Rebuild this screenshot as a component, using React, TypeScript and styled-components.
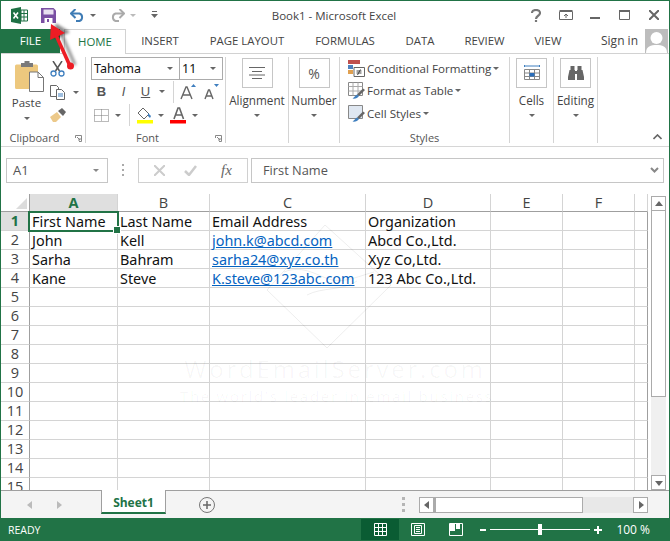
import styled, { createGlobalStyle } from "styled-components";

const Global = createGlobalStyle`
    html, body { margin: 0; padding: 0; background: #fff; }
    * { box-sizing: border-box; }
    body { font-family: "Open Sans", "Noto Sans", sans-serif; color: #444; overflow: hidden; }
`;

const GREEN = "#217346";
const CELL_FONT = `"Noto Sans", "Open Sans", sans-serif`;

const Win = styled.div`
    width: 670px;
    height: 541px;
    position: relative;
    overflow: hidden;
    display: flex;
    flex-direction: column;
    border-top: 1px solid ${GREEN};
    border-left: 1px solid ${GREEN};
    border-right: 1px solid ${GREEN};
`;

/* title bar */
const TitleBar = styled.div`
    height: 28px;
    display: flex;
    align-items: center;
    padding-left: 10px;
`;
const Qat = styled.div`
    display: flex;
    align-items: center;
    width: 230px;
`;
const QatSlot = styled.span<{ $w: number }>`
    width: ${(p) => p.$w}px;
    display: flex;
    align-items: center;
`;
const Title = styled.div`
    width: 186px;
    text-align: center;
    font-size: 11.5px;
    color: #444;
    white-space: nowrap;
`;
const WinBtns = styled.div`
    margin-left: auto;
    display: flex;
    align-items: center;
    height: 100%;
`;
const WinBtn = styled.span`
    width: 29.5px;
    display: flex;
    justify-content: center;
`;

/* tabs */
const TabBar = styled.div`
    height: 25px;
    display: flex;
    align-items: stretch;
    border-bottom: 1px solid #d2d2d2;
    margin-left: -1px;
`;
const FileTab = styled.div`
    width: 60px;
    background: ${GREEN};
    color: #fff;
    font-size: 11.5px;
    display: flex;
    align-items: center;
    justify-content: center;
    margin-right: 4px;
    padding: 0 0 2px 1px;
`;
const Tab = styled.div<{ $w: number; $active?: boolean }>`
    width: ${(p) => p.$w}px;
    font-size: 11.4px;
    display: flex;
    align-items: center;
    justify-content: center;
    padding-bottom: 2px;
    color: ${(p) => (p.$active ? GREEN : "#444")};
    ${(p) =>
        p.$active &&
        `background:#fff;border:1px solid #d2d2d2;border-bottom:0;height:25px;`}
`;
const SignIn = styled.div`
    margin-left: auto;
    display: flex;
    align-items: center;
    gap: 7px;
    font-size: 12px;
    padding-right: 1px;
`;
const SignText = styled.span`
    padding-bottom: 2px;
`;
const Avatar = styled.div`
    width: 23px;
    height: 24px;
    background: #bdbdbd;
    overflow: hidden;
`;

/* ribbon */
const Ribbon = styled.div`
    height: 93px;
    display: flex;
    border-bottom: 1px solid #d6d6d6;
    position: relative;
    padding-left: 2px;
`;
const Group = styled.div<{ $w: number }>`
    width: ${(p) => p.$w}px;
    margin: 3px 0;
    border-right: 1px solid #d4d4d4;
    display: flex;
    flex-direction: column;
    position: relative;
`;
const GroupBody = styled.div`
    flex: 1;
    display: flex;
    min-height: 0;
`;
const GroupLabel = styled.div<{ $pr?: number }>`
    height: 10px;
    font-size: 11px;
    color: #555;
    text-align: center;
    line-height: 10px;
    padding-right: ${(p) => p.$pr ?? 0}px;
`;
const Launcher = styled.span`
    position: absolute;
    right: 3px;
    bottom: 1px;
    display: flex;
`;
const PasteCol = styled.div`
    width: 47px;
    display: flex;
    flex-direction: column;
    align-items: center;
    padding-top: 4px;
    font-size: 11.5px;
    svg { margin-left: 5px; flex: none; }
`;
const PasteText = styled.div`
    margin: 3px 0 6px;
    color: #444;
    line-height: 16px;
`;
const SmallCol = styled.div`
    display: flex;
    flex-direction: column;
    padding-top: 3px;
    gap: 5px;
`;
const SmallIcon = styled.div`
    height: 18px;
    display: flex;
    align-items: center;
    gap: 7px;
`;
const Caret = styled.span<{ $c?: string; $gap?: number }>`
    display: inline-block;
    flex: none;
    width: 0;
    height: 0;
    border-left: 3px solid transparent;
    border-right: 3px solid transparent;
    border-top: 3px solid ${(p) => p.$c || "#666"};
    margin-left: ${(p) => p.$gap ?? 0}px;
`;

const FontCol = styled.div`
    padding: 0 0 0 5px;
    display: flex;
    flex-direction: column;
`;
const Combos = styled.div`
    display: flex;
    flex: none;
    height: 23px;
`;
const Combo = styled.div<{ $w: number; $pl: number }>`
    width: ${(p) => p.$w}px;
    border: 1px solid #ababab;
    margin-right: -1px;
    font-family: ${CELL_FONT};
    font-size: 12.5px;
    color: #111;
    display: flex;
    align-items: center;
    justify-content: space-between;
    padding: 0 6px 0 ${(p) => p.$pl}px;
    background: #fff;
`;
const FontRow = styled.div`
    display: flex;
    flex: none;
    align-items: center;
    height: 23.5px;
`;
const FontBtn = styled.span<{ $w: number }>`
    width: ${(p) => p.$w}px;
    flex: none;
    display: flex;
    justify-content: center;
    align-items: center;
`;
const Letter = styled.span<{ $b?: boolean; $i?: boolean; $u?: boolean }>`
    font-family: "Liberation Sans", sans-serif;
    font-size: 13px;
    color: #555;
    font-weight: ${(p) => (p.$b ? 700 : 400)};
    font-style: ${(p) => (p.$i ? "italic" : "normal")};
    text-decoration: ${(p) => (p.$u ? "underline" : "none")};
`;
const RowSep = styled.span<{ $ml: number }>`
    width: 1px;
    height: 22px;
    flex: none;
    background: #d4d4d4;
    margin: 0 3px 0 ${(p) => p.$ml}px;
`;
const BigCol = styled.div`
    flex: 1;
    display: flex;
    flex-direction: column;
    align-items: center;
    padding-top: 1px;
    font-size: 11.7px;
    color: #444;
`;
const BigBox = styled.div`
    width: 31px;
    height: 30px;
    border: 1px solid #c6c6c6;
    display: flex;
    align-items: center;
    justify-content: center;
    font-size: 14px;
    color: #555;
    margin-bottom: 4px;
`;
const BigText = styled.div`
    line-height: 17px;
    white-space: nowrap;
    margin-bottom: 5px;
`;
const StyleCol = styled.div`
    padding: 0 0 0 8px;
    display: flex;
    flex-direction: column;
`;
const StyleRow = styled.div`
    height: 22.5px;
    display: flex;
    align-items: center;
    gap: 2px;
    font-size: 11.6px;
    white-space: nowrap;
`;
const Collapse = styled.span`
    position: absolute;
    right: 7px;
    bottom: 6px;
    display: flex;
`;

/* formula bar */
const FormulaBar = styled.div`
    height: 46px;
    display: flex;
    align-items: center;
    padding: 0 5px;
`;
const NameBox = styled.div`
    width: 102px;
    height: 25px;
    border: 1px solid #c6c6c6;
    display: flex;
    align-items: center;
    justify-content: space-between;
    padding: 0 8px 0 6px;
    font-size: 13px;
    color: #555;
`;
const Dots = styled.div`
    width: 30px;
    display: flex;
    flex-direction: column;
    align-items: center;
    gap: 3px;
    span { width: 2px; height: 2px; background: #aaa; }
`;
const FxBox = styled.div`
    width: 110px;
    height: 25px;
    border: 1px solid #d0d0d0;
    display: flex;
    align-items: center;
    justify-content: space-around;
    margin-right: 3px;
    padding: 0 6px;
`;
const FxText = styled.span`
    font-family: "Liberation Serif", serif;
    font-style: italic;
    font-size: 15px;
    color: #666;
    padding-left: 6px;
`;
const FormulaInput = styled.div`
    flex: 1;
    height: 25px;
    border: 1px solid #c6c6c6;
    display: flex;
    align-items: center;
    justify-content: space-between;
    padding: 0 4px 0 11px;
    font-size: 12.8px;
    color: #555;
`;

/* grid */
const SheetArea = styled.div`
    flex: none;
    height: 296px;
    display: flex;
    margin-top: 1px;
`;
const Sheet = styled.div`
    width: 647px;
    height: 296px;
    overflow: hidden;
    position: relative;
`;
const Grid = styled.div`
    display: grid;
    grid-template-columns: 29px 88px 92px 156px 125px 72px 72px 13px;
    grid-auto-rows: 19px;
    grid-template-rows: 18px;
`;
const ColHead = styled.div<{ $sel?: boolean }>`
    border-right: 1px solid #d4d4d4;
    border-bottom: 1px solid #9f9f9f;
    background: ${(p) => (p.$sel ? "#dfdfdf" : "#fff")};
    color: ${(p) => (p.$sel ? GREEN : "#444")};
    font-weight: ${(p) => (p.$sel ? 700 : 400)};
    font-size: 14.5px;
    line-height: 17px;
    text-align: center;
`;
const Corner = styled.div`
    border-right: 1px solid #9f9f9f;
    border-bottom: 1px solid #9f9f9f;
    display: flex;
    align-items: flex-end;
    justify-content: flex-end;
    padding: 0 2px 2px 0;
`;
const RowHead = styled.div<{ $sel?: boolean }>`
    border-right: 1px solid #9f9f9f;
    border-bottom: 1px solid #d4d4d4;
    background: ${(p) => (p.$sel ? "#dfdfdf" : "#fff")};
    color: ${(p) => (p.$sel ? GREEN : "#444")};
    font-weight: ${(p) => (p.$sel ? 700 : 400)};
    font-size: 14.5px;
    line-height: 18px;
    text-align: center;
`;
const Cell = styled.div<{ $link?: boolean; $end?: boolean }>`
    border-right: 1px solid ${(p) => (p.$end ? "#9f9f9f" : "#d4d4d4")};
    border-bottom: 1px solid #d4d4d4;
    font-family: ${CELL_FONT};
    font-size: 14.4px;
    line-height: 19px;
    padding-left: 2px;
    white-space: nowrap;
    color: ${(p) => (p.$link ? "#0563c1" : "#111")};
    text-decoration: ${(p) => (p.$link ? "underline" : "none")};
`;
const Selection = styled.div`
    position: absolute;
    left: 27px;
    top: 17px;
    width: 91px;
    height: 21px;
    border: 2px solid ${GREEN};
    pointer-events: none;
    &::after {
        content: "";
        position: absolute;
        right: -4px;
        bottom: -4px;
        width: 6px;
        height: 6px;
        background: ${GREEN};
        border: 1px solid #fff;
    }
`;
const Watermark = styled.div`
    position: absolute;
    left: 179px;
    top: 31px;
    width: 310px;
    text-align: center;
    pointer-events: none;
    color: rgba(0, 0, 0, 0.035);
`;
const MarkGem = styled.svg`
    display: block;
    margin-left: 82px;
`;
const MarkName = styled.div`
    margin-top: 4px;
    font-size: 24px;
    line-height: 32px;
    letter-spacing: 2.8px;
    white-space: nowrap;
`;
const MarkLine = styled.div`
    margin-top: 1px;
    font-size: 15px;
    line-height: 20px;
    letter-spacing: 1.7px;
    white-space: nowrap;
`;

const VScroll = styled.div`
    width: 17px;
    height: 296px;
    margin-left: 3px;
    padding-top: 2px;
    display: flex;
    flex-direction: column;
`;
const ScrollBtn = styled.div`
    width: 15px;
    height: 15px;
    border: 1px solid #ababab;
    display: flex;
    align-items: center;
    justify-content: center;
    flex: none;
    background: #fff;
`;
const VThumb = styled.div`
    width: 15px;
    height: 186px;
    border: 1px solid #ababab;
    border-top: 0;
    background: #fff;
    flex: none;
`;
const VTrack = styled.div`
    width: 15px;
    flex: 1;
    background: #f0f0f0;
`;

/* sheet tabs */
const SheetBar = styled.div`
    height: 28px;
    flex: none;
    background: #f4f4f4;
    border-top: 1px solid #9f9f9f;
    display: flex;
    align-items: center;
`;
const NavArrows = styled.div`
    width: 100px;
    display: flex;
    gap: 21px;
    padding-left: 25px;
`;
const SheetTab = styled.div`
    width: 65px;
    height: 24px;
    align-self: flex-start;
    margin-top: -1px;
    background: #fff;
    border: 1px solid #9f9f9f;
    border-top: 0;
    border-bottom: 2px solid ${GREEN};
    color: ${GREEN};
    font-weight: 700;
    font-size: 12px;
    text-align: center;
    line-height: 25px;
`;
const AddSheet = styled.div`
    width: 16px;
    height: 16px;
    border: 1.5px solid #777;
    border-radius: 50%;
    margin-left: 33px;
    color: #666;
    display: flex;
    align-items: center;
    justify-content: center;
`;
const BarDots = styled.div`
    margin-left: 187px;
    display: flex;
    flex-direction: column;
    gap: 3px;
    span { width: 3px; height: 3px; background: #b5b5b5; }
`;
const HScroll = styled.div`
    margin-left: 14px;
    width: 229px;
    height: 16px;
    display: flex;
    background: #e8e8e8;
`;
const HThumb = styled.div`
    width: 149px;
    height: 16px;
    background: #fff;
    border: 1px solid #ababab;
    border-left: 2px solid #ababab;
    flex: none;
`;
const HGap = styled.div`
    flex: 1;
`;
const HBtn = styled(ScrollBtn)`
    height: 16px;
`;

/* status */
const StatusBar = styled.div`
    height: 23px;
    flex: none;
    background: ${GREEN};
    color: #fff;
    display: flex;
    align-items: center;
    font-size: 10.5px;
    margin: 0 -1px;
    padding-left: 8px;
`;
const ViewBtns = styled.div`
    margin-left: 321px;
    display: flex;
    align-items: center;
    height: 100%;
`;
const ViewBtn = styled.div<{ $on?: boolean }>`
    width: 38px;
    height: 21px;
    display: flex;
    align-items: center;
    justify-content: center;
    background: ${(p) => (p.$on ? "#0a5c33" : "transparent")};
`;
const Zoom = styled.div`
    margin-left: 5px;
    display: flex;
    align-items: center;
    gap: 4px;
`;
const Slider = styled.div`
    width: 100px;
    height: 1px;
    background: #fff;
    position: relative;
`;
const SliderThumb = styled.span`
    position: absolute;
    left: 48px;
    top: -5px;
    width: 4px;
    height: 11px;
    background: #fff;
`;
const ZoomPct = styled.div`
    margin-left: auto;
    padding-right: 20px;
    font-size: 12px;
`;

/* the red arrow drawn over the screenshot */
const ArrowOverlay = styled.svg`
    position: absolute;
    left: 39px;
    top: 19px;
    pointer-events: none;
`;

function ExcelLogo() {
    return (
        <svg width="17" height="17" viewBox="0 0 17 17">
            <path d="M0 2 10 0v17L0 15z" fill="#1e7145" />
            <path d="M10 3h6.500v11H10z" fill="#fff" stroke="#1e7145" />
            <path d="M10 6.500h6.500M10 10h6.500M13 3v11" stroke="#1e7145" />
            <path d="M2.500 5.500 7 11.500M7 5.500 2.500 11.500" stroke="#fff" strokeWidth="1.600" />
        </svg>
    );
}
function SaveIcon() {
    return (
        <svg width="15" height="15" viewBox="0 0 15 15">
            <path d="M0 0h12.500L15 2.500V15H0z" fill="#7a4fa3" />
            <path d="M2.500 1.500h10v5h-10z" fill="#e8e0f0" />
            <path d="M3.500 10h8v5h-8z" fill="#fff" />
            <path d="M6 11h2v3H6z" fill="#7a4fa3" />
        </svg>
    );
}
function UndoIcon({ c }: { c: string }) {
    return (
        <svg width="15" height="13" viewBox="0 0 15 13" fill="none">
            <path d="M1 4.500h8.500a4 4 0 0 1 0 7.500H6" stroke={c} strokeWidth="2" />
            <path d="M5.500 0 1 4.500 5.500 9" stroke={c} strokeWidth="2" />
        </svg>
    );
}
function RedoIcon() {
    return (
        <svg width="15" height="13" viewBox="0 0 15 13" fill="none">
            <path d="M14 4.500H5.500a4 4 0 0 0 0 7.500H9" stroke="#aaa" strokeWidth="2" />
            <path d="M9.500 0 14 4.500 9.500 9" stroke="#aaa" strokeWidth="2" />
        </svg>
    );
}
function ClipIcon() {
    return (
        <svg width="29" height="31" viewBox="0 0 29 31">
            <path d="M0 5a1.500 1.500 0 0 1 1.500-1.500h20A1.500 1.500 0 0 1 23 5v23H1.500A1.500 1.500 0 0 1 0 26.500z" fill="#edc87e" />
            <path d="M6 2h3.500V0h5v2H18v4H6z" fill="#7a7a7a" />
            <path d="M14.500 11H23l5.500 5.500V30.500H14.500z" fill="#fff" stroke="#777" />
            <path d="M23 11v5.500h5.500" fill="none" stroke="#777" />
        </svg>
    );
}
function CutIcon() {
    return (
        <svg width="15" height="16" viewBox="0 0 15 16" fill="none">
            <path d="M3 0 9.500 10M12 0 5.500 10" stroke="#555" strokeWidth="1.500" />
            <circle cx="3.500" cy="12.500" r="2.500" stroke="#3f7fbf" strokeWidth="1.300" />
            <circle cx="11.500" cy="12.500" r="2.500" stroke="#3f7fbf" strokeWidth="1.300" />
        </svg>
    );
}
function CopyIcon() {
    return (
        <svg width="16" height="15" viewBox="0 0 16 15" fill="none">
            <path d="M.500.500h6l2 2v9h-8z" fill="#fff" stroke="#666" />
            <path d="M6.500 4.500h5l3 3v7h-8z" fill="#fff" stroke="#666" />
            <path d="M8 9h5M8 11h5" stroke="#3f7fbf" />
        </svg>
    );
}
function BrushIcon() {
    return (
        <svg width="16" height="14" viewBox="0 0 16 14">
            <path d="M0 9 7 4l4 5-5 5H3z" fill="#ecc98a" />
            <path d="M8 3 12 0l4 4-3 4z" fill="#666" />
        </svg>
    );
}
function BordersIcon() {
    return (
        <svg width="15" height="13" viewBox="0 0 15 13" fill="none" stroke="#777" strokeDasharray="1 1">
            <path d="M.500.500h14v12H.500zM7.500.500v12M.500 6.500h14" />
        </svg>
    );
}
function FillIcon() {
    return (
        <svg width="17" height="17" viewBox="0 0 17 17">
            <path d="M1 6 6 1l6 6-5 5z" fill="#fff" stroke="#666" />
            <path d="M11 6l3 3-1 2-2-2z" fill="#3f7fbf" />
            <path d="M0 13h16v3.500H0z" fill="#ffff00" />
        </svg>
    );
}
function ColorA() {
    return (
        <svg width="17" height="17" viewBox="0 0 17 17">
            <path d="M4 12 8 1h1.500l4 11M6 8h5.500" fill="none" stroke="#666" strokeWidth="1.600" />
            <path d="M0 13h16v3.500H0z" fill="#ff0000" />
        </svg>
    );
}
function GrowA({ up }: { up?: boolean }) {
    return (
        <svg width="18" height="16" viewBox="0 0 18 16">
            <path d={up ? "M1 15 6 3h1l5 12M3 11h7" : "M3 15 6.500 6h1L11 15M4.500 12h5"} fill="none" stroke="#666" strokeWidth="1.400" />
            <path d={up ? "M11 3l2.500-3L16 3z" : "M12 0h5l-2.500 3z"} fill="#3f7fbf" />
        </svg>
    );
}
function AlignIcon() {
    return (
        <svg width="16" height="12" viewBox="0 0 16 12" stroke="#666">
            <path d="M0 .500h16M3 4.500h10M0 8h16M3 11.500h10" />
        </svg>
    );
}
function CondIcon() {
    return (
        <svg width="17" height="17" viewBox="0 0 17 17">
            <path d="M0 0h12v4H0z" fill="#c0504d" />
            <path d="M0 5h5v4H0z" fill="#4f81bd" />
            <path d="M0 10h5v4H0z" fill="#e0a050" />
            <path d="M6 7.500h10.500v9H6z" fill="#fff" stroke="#666" />
            <path d="M8.500 11h5M8.500 13h5M12.500 9.500l-3 5.500" stroke="#444" fill="none" />
        </svg>
    );
}
function TableIcon({ solid }: { solid?: boolean }) {
    return (
        <svg width="17" height="17" viewBox="0 0 17 17" fill="none">
            <path d="M.500.500h14v13H.500z" fill={solid ? "#dfe7f1" : "#fff"} stroke="#888" />
            {!solid && <path d="M.500 4.500h14M.500 9h14M5 .500v13M10 .500v13" stroke="#aaa" />}
            <path d="M15 6.500 17 8l-6 6-2-1.500z" fill="#666" />
            <path d="M9 12.500 11 14c-1 2-4 3-6.500 2.500C6.500 15.500 7 13.500 9 12.500z" fill="#3f7fbf" />
        </svg>
    );
}
function CellsIcon() {
    return (
        <svg width="16" height="18" viewBox="0 0 16 18" fill="none">
            <path d="M.500 1v2M15.500 1v2M1 2h14" stroke="#3f7fbf" />
            <path d="M.500 5.500h15v10H.500zM.500 9h15M.500 12.500h15M5.500 5.500v10M10.500 5.500v10" stroke="#888" />
            <path d="M5.500 9h5v3.500h-5z" fill="#2a6ebb" />
        </svg>
    );
}
function BinocularIcon() {
    return (
        <svg width="16" height="14" viewBox="0 0 16 14" fill="#666">
            <path d="M2.500 0h4v6h-4zM9.500 0h4v6h-4zM1.500 4h5.500v10H0v-3zM9 4h5.500L16 11v3H9zM7 5h2v3H7z" />
        </svg>
    );
}
function Launch() {
    return (
        <svg width="7" height="7" viewBox="0 0 7 7" fill="none" stroke="#888">
            <path d="M.500 3V.500H6.500V6.500H4M2 2l3 3M5 3v2H3" />
        </svg>
    );
}
function Tri({ dir, c = "#666" }: { dir: "up" | "down" | "left" | "right"; c?: string }) {
    const d = { up: "M0 6 4 1l4 5z", down: "M0 2h8L4 7z", left: "M6 0v8L1 4z", right: "M2 0v8l5-4z" }[dir];
    return (
        <svg width="8" height="8" viewBox="0 0 8 8">
            <path d={d} fill={c} />
        </svg>
    );
}

const rows = [
    ["First Name", "Last Name", "Email Address", "Organization"],
    ["John", "Kell", "john.k@abcd.com", "Abcd Co.,Ltd."],
    ["Sarha", "Bahram", "sarha24@xyz.co.th", "Xyz Co,Ltd."],
    ["Kane", "Steve", "K.steve@123abc.com", "123 Abc Co.,Ltd."],
];
const cols = ["A", "B", "C", "D", "E", "F"];

function Row({ r }: { r: number }) {
    const data = rows[r];
    return (
        <>
            <RowHead $sel={r === 0}>{r + 1}</RowHead>
            {cols.map((c, i) => (
                <Cell key={c} $link={r > 0 && i === 2 && !!data}>
                    {data?.[i]}
                </Cell>
            ))}
            <Cell $end />
        </>
    );
}

function App() {
    const rowNums = Array.from({ length: 15 }, (_, i) => i);
    return (
        <>
            <Global />
            <Win>
                <TitleBar>
                    <Qat>
                        <QatSlot $w={30}><ExcelLogo /></QatSlot>
                        <QatSlot $w={29}><SaveIcon /></QatSlot>
                        <QatSlot $w={40}>
                            <UndoIcon c="#3f7cb5" />
                            <Caret $gap={5} />
                        </QatSlot>
                        <QatSlot $w={41}>
                            <RedoIcon />
                            <Caret $gap={5} $c="#bbb" />
                        </QatSlot>
                        <QatSlot $w={10}>
                            <svg width="7" height="8" viewBox="0 0 7 8" fill="#666">
                                <path d="M1 0h5v1H1zM0 3h7L3.500 7z" />
                            </svg>
                        </QatSlot>
                    </Qat>
                    <Title>Book1 - Microsoft Excel</Title>
                    <WinBtns>
                        <WinBtn>
                            <svg width="10" height="13" viewBox="0 0 10 13" fill="none" stroke="#777" strokeWidth="2.200">
                                <path d="M1 4c0-4 8-4 8 0 0 3-4 2.500-4 6" />
                                <path d="M5 11v2" />
                            </svg>
                        </WinBtn>
                        <WinBtn>
                            <svg width="14" height="10" viewBox="0 0 14 10" fill="none" stroke="#666">
                                <path d="M.500 1.500h13v8H.500zM.500.500h13M7 8V4M5 6l2-2 2 2" />
                            </svg>
                        </WinBtn>
                        <WinBtn>
                            <svg width="10" height="10" viewBox="0 0 10 10" fill="#666">
                                <path d="M0 7h10v2H0z" />
                            </svg>
                        </WinBtn>
                        <WinBtn>
                            <svg width="11" height="10" viewBox="0 0 11 10" fill="none" stroke="#666">
                                <path d="M.500 1h10v8.500H.500z" />
                                <path d="M0 1h11" strokeWidth="2" />
                            </svg>
                        </WinBtn>
                        <WinBtn>
                            <svg width="10" height="10" viewBox="0 0 10 10" fill="none" stroke="#666" strokeWidth="2">
                                <path d="M0 0l10 10M10 0 0 10" />
                            </svg>
                        </WinBtn>
                    </WinBtns>
                </TitleBar>

                <TabBar>
                    <FileTab>FILE</FileTab>
                    <Tab $w={62} $active>HOME</Tab>
                    <Tab $w={68}>INSERT</Tab>
                    <Tab $w={106}>PAGE LAYOUT</Tab>
                    <Tab $w={90}>FORMULAS</Tab>
                    <Tab $w={60}>DATA</Tab>
                    <Tab $w={69}>REVIEW</Tab>
                    <Tab $w={58}>VIEW</Tab>
                    <SignIn>
                        <SignText>Sign in</SignText>
                        <Avatar>
                            <svg width="23" height="24" viewBox="0 0 23 24">
                                <circle cx="11.500" cy="9" r="6" fill="#fff" />
                                <path d="M1 24c0-7 5-8 10.500-8S22 17 22 24z" fill="#fff" />
                            </svg>
                        </Avatar>
                    </SignIn>
                </TabBar>

                <Ribbon>
                    <Group $w={83}>
                        <GroupBody>
                            <PasteCol>
                                <ClipIcon />
                                <PasteText>Paste</PasteText>
                                <Caret />
                            </PasteCol>
                            <SmallCol>
                                <SmallIcon><CutIcon /></SmallIcon>
                                <SmallIcon><CopyIcon /><Caret /></SmallIcon>
                                <SmallIcon><BrushIcon /></SmallIcon>
                            </SmallCol>
                        </GroupBody>
                        <GroupLabel $pr={19}>Clipboard</GroupLabel>
                        <Launcher><Launch /></Launcher>
                    </Group>
                    <Group $w={140}>
                        <GroupBody>
                            <FontCol>
                                <Combos>
                                    <Combo $w={89} $pl={2}>Tahoma<Caret /></Combo>
                                    <Combo $w={44} $pl={2}>11<Caret /></Combo>
                                </Combos>
                                <FontRow>
                                    <FontBtn $w={21}><Letter $b>B</Letter></FontBtn>
                                    <FontBtn $w={23}><Letter $i>I</Letter></FontBtn>
                                    <FontBtn $w={21}><Letter $u>U</Letter></FontBtn>
                                    <Caret $gap={3} />
                                    <RowSep $ml={8} />
                                    <FontBtn $w={24}><GrowA up /></FontBtn>
                                    <FontBtn $w={20}><GrowA /></FontBtn>
                                </FontRow>
                                <FontRow>
                                    <FontBtn $w={21}><BordersIcon /></FontBtn>
                                    <Caret $gap={3} />
                                    <RowSep $ml={8} />
                                    <FontBtn $w={24}><FillIcon /></FontBtn>
                                    <Caret $gap={1} />
                                    <FontBtn $w={28}><ColorA /></FontBtn>
                                    <Caret />
                                </FontRow>
                            </FontCol>
                        </GroupBody>
                        <GroupLabel $pr={16}>Font</GroupLabel>
                        <Launcher><Launch /></Launcher>
                    </Group>
                    <Group $w={63}>
                        <GroupBody>
                            <BigCol>
                                <BigBox><AlignIcon /></BigBox>
                                <BigText>Alignment</BigText>
                                <Caret />
                            </BigCol>
                        </GroupBody>
                    </Group>
                    <Group $w={51}>
                        <GroupBody>
                            <BigCol>
                                <BigBox>%</BigBox>
                                <BigText>Number</BigText>
                                <Caret />
                            </BigCol>
                        </GroupBody>
                    </Group>
                    <Group $w={170}>
                        <GroupBody>
                            <StyleCol>
                                <StyleRow><CondIcon />Conditional Formatting <Caret /></StyleRow>
                                <StyleRow><TableIcon />Format as Table <Caret /></StyleRow>
                                <StyleRow><TableIcon solid />Cell Styles <Caret /></StyleRow>
                            </StyleCol>
                        </GroupBody>
                        <GroupLabel>Styles</GroupLabel>
                    </Group>
                    <Group $w={44}>
                        <GroupBody>
                            <BigCol>
                                <BigBox><CellsIcon /></BigBox>
                                <BigText>Cells</BigText>
                                <Caret />
                            </BigCol>
                        </GroupBody>
                    </Group>
                    <Group $w={44}>
                        <GroupBody>
                            <BigCol>
                                <BigBox><BinocularIcon /></BigBox>
                                <BigText>Editing</BigText>
                                <Caret />
                            </BigCol>
                        </GroupBody>
                    </Group>
                    <Collapse>
                        <svg width="9" height="6" viewBox="0 0 9 6" fill="none" stroke="#666" strokeWidth="1.600">
                            <path d="M.500 5 4.500 1l4 4" />
                        </svg>
                    </Collapse>
                </Ribbon>

                <FormulaBar>
                    <NameBox>A1<Caret $c="#888" /></NameBox>
                    <Dots><span /><span /><span /></Dots>
                    <FxBox>
                        <svg width="11" height="11" viewBox="0 0 11 11" stroke="#ccc" strokeWidth="2">
                            <path d="M0 0l11 11M11 0 0 11" />
                        </svg>
                        <svg width="13" height="11" viewBox="0 0 13 11" fill="none" stroke="#ccc" strokeWidth="2.500">
                            <path d="M1 6l4 4 7-9" />
                        </svg>
                        <FxText>fx</FxText>
                    </FxBox>
                    <FormulaInput>
                        First Name
                        <svg width="9" height="6" viewBox="0 0 9 6" fill="none" stroke="#888" strokeWidth="2">
                            <path d="M1 1l3.500 3.500L8 1" />
                        </svg>
                    </FormulaInput>
                </FormulaBar>

                <SheetArea>
                    <Sheet>
                        <Grid>
                            <Corner>
                                <svg width="11" height="11" viewBox="0 0 11 11">
                                    <path d="M11 0v11H0z" fill="#dcdcdc" />
                                </svg>
                            </Corner>
                            {cols.map((c, i) => (
                                <ColHead key={c} $sel={i === 0}>{c}</ColHead>
                            ))}
                            <ColHead />
                            {rowNums.map((r) => (
                                <Row key={r} r={r} />
                            ))}
                        </Grid>
                        <Selection />
                        <Watermark>
                            <MarkGem width="130" height="124" viewBox="0 0 130 124" fill="none" stroke="rgba(0,0,0,0.07)">
                                <path d="M63 0 5 65l60 58 64-63zM22 47c20-8 35 5 48 8s30-5 42-8M45 70c15-8 35-4 50-14" />
                            </MarkGem>
                            <MarkName>WordEmailServer.com</MarkName>
                            <MarkLine>The world's leader in email business</MarkLine>
                        </Watermark>
                    </Sheet>
                    <VScroll>
                        <ScrollBtn><Tri dir="up" /></ScrollBtn>
                        <VThumb />
                        <VTrack />
                        <ScrollBtn><Tri dir="down" /></ScrollBtn>
                    </VScroll>
                </SheetArea>

                <SheetBar>
                    <NavArrows>
                        <Tri dir="left" c="#bbb" />
                        <Tri dir="right" c="#bbb" />
                    </NavArrows>
                    <SheetTab>Sheet1</SheetTab>
                    <AddSheet>
                        <svg width="8" height="8" viewBox="0 0 8 8" stroke="#666" strokeWidth="1.500">
                            <path d="M4 0v8M0 4h8" />
                        </svg>
                    </AddSheet>
                    <BarDots><span /><span /><span /></BarDots>
                    <HScroll>
                        <HBtn><Tri dir="left" /></HBtn>
                        <HThumb />
                        <HGap />
                        <HBtn><Tri dir="right" /></HBtn>
                    </HScroll>
                </SheetBar>

                <StatusBar>
                    READY
                    <ViewBtns>
                        <ViewBtn $on>
                            <svg width="13" height="13" viewBox="0 0 13 13" fill="none" stroke="#fff">
                                <path d="M.500.500h12v12H.500zM.500 4.500h12M.500 8.500h12M4.500.500v12M8.500.500v12" />
                            </svg>
                        </ViewBtn>
                        <ViewBtn>
                            <svg width="14" height="13" viewBox="0 0 14 13" fill="none" stroke="#fff">
                                <path d="M.500.500h13v12H.500zM3.500 2.500h7v8h-7zM5 4.500h4M5 6.500h4M5 8.500h4" />
                            </svg>
                        </ViewBtn>
                        <ViewBtn>
                            <svg width="14" height="13" viewBox="0 0 14 13" fill="none" stroke="#fff">
                                <path d="M.500.500h13v12H.500z" />
                                <path d="M1 0h5v8H1zM7 0h4v6H7z" fill="#fff" stroke="none" />
                            </svg>
                        </ViewBtn>
                    </ViewBtns>
                    <Zoom>
                        <svg width="6" height="2" viewBox="0 0 6 2"><path d="M0 0h6v2H0z" fill="#fff" /></svg>
                        <Slider><SliderThumb /></Slider>
                        <svg width="8" height="8" viewBox="0 0 8 8"><path d="M3 0h2v3h3v2H5v3H3V5H0V3h3z" fill="#fff" /></svg>
                    </Zoom>
                    <ZoomPct>100 %</ZoomPct>
                </StatusBar>

                <ArrowOverlay width="44" height="56" viewBox="0 0 44 56">
                    <defs>
                        <filter id="arrowBlur" x="-40%" y="-40%" width="180%" height="180%">
                            <feGaussianBlur stdDeviation="1.800" />
                        </filter>
                    </defs>
                    <g transform="translate(5 -1)" filter="url(#arrowBlur)" fill="rgba(0,0,0,0.45)" stroke="rgba(0,0,0,0.45)">
                        <path d="M11 5 10 19 24 13z" />
                        <path d="M16 14 30 46" strokeWidth="3" />
                    </g>
                    <path d="M11 4 10 20 25 13z" fill="#ed1c24" />
                    <path d="M15.500 14 30 46" stroke="#ed1c24" strokeWidth="3.600" />
                    <circle cx="30.500" cy="46" r="3.500" fill="#ed1c24" />
                </ArrowOverlay>
            </Win>
        </>
    );
}

export default App;
